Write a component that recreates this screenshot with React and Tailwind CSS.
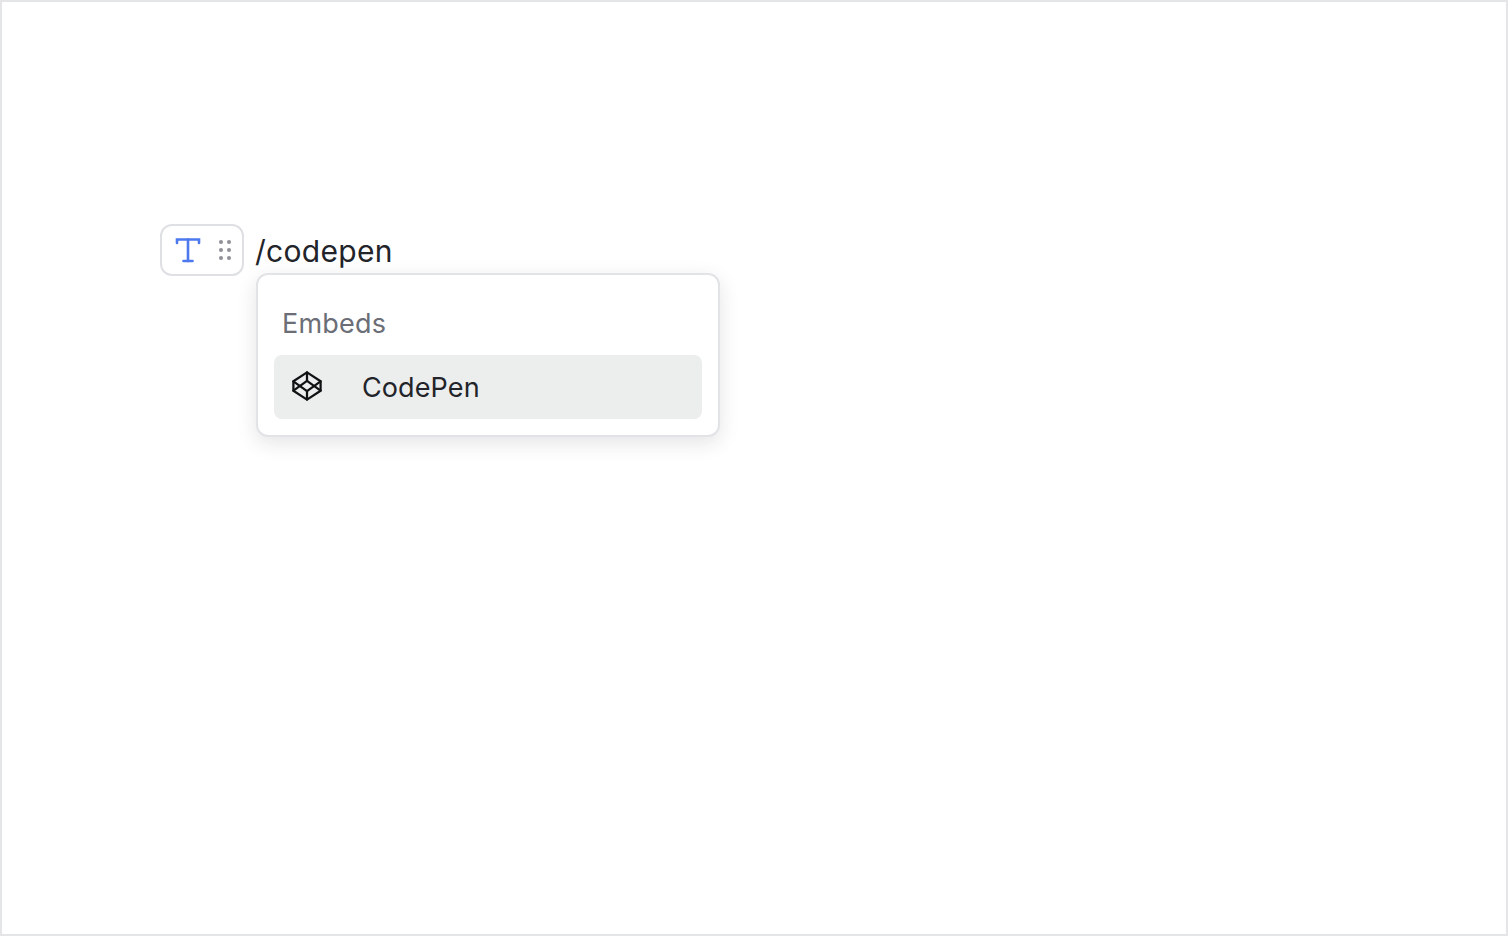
import React from 'react'

function CodePenIcon() {
  return (
    <svg width="30" height="30" viewBox="0 0 32 32" fill="none" stroke="#111214" strokeWidth="2.4" strokeLinejoin="round" strokeLinecap="round" className="-mt-0.5">
      <path d="M16 1.5 L30.5 11 V21 L16 30.5 L1.5 21 V11 Z" />
      <path d="M16 1.5 V10.5 M16 21.5 V30.5" />
      <path d="M1.5 11 L16 21.5 L30.5 11" />
      <path d="M1.5 21 L16 10.5 L30.5 21" />
    </svg>
  )
}

function DragDots() {
  return (
    <div className="grid grid-cols-2 gap-x-[4px] gap-y-[4px]">
      {[0, 1, 2, 3, 4, 5].map((i) => (
        <span key={i} className="w-1 h-1 rounded-full bg-[#8e9096]" />
      ))}
    </div>
  )
}

function App() {
  return (
    <div className="w-[1508px] h-[936px] bg-white border-2 border-[#e4e5e7] pt-[222px] pl-[158px] font-['Inter',sans-serif] overflow-hidden">
      <div className="flex items-start gap-3">
        {/* block handle */}
        <div className="w-[84px] h-[52px] flex items-center pl-[13px] border-2 border-[#dfe0e4] rounded-[12px]">
          <svg width="26" height="26" viewBox="0 0 26 26" fill="none" stroke="#4d78ee" strokeWidth="2.6" strokeLinecap="round">
            <path d="M2 6 V2.5 H24 V6" />
            <path d="M13 2.5 V24" />
            <path d="M8.5 24 H17.5" />
          </svg>
          <div className="ml-[18px]">
            <DragDots />
          </div>
        </div>

        <div className="relative">
          <div className="text-[30px] leading-[52px] pt-px -ml-px text-[#22242a] tracking-[0.3px]">/codepen</div>

          {/* slash menu */}
          <div className="absolute left-0 top-[49px] w-[464px] h-[164px] bg-white border-2 border-[#e2e3e6] rounded-[12px] shadow-[0_6px_20px_rgba(30,35,50,0.12)] px-4 pt-[29px]">
            <div className="pl-2 text-[27px] leading-[40px] text-[#6b6e76] tracking-[0.2px]">Embeds</div>
            <div className="mt-[11px] h-16 w-[428px] rounded-lg bg-[#eceeee] flex items-center pl-[18px]">
              <CodePenIcon />
              <span className="ml-[40px] pt-[2px] text-[27px] text-[#22242a] tracking-[0.1px]">CodePen</span>
            </div>
          </div>
        </div>
      </div>
    </div>
  )
}

export default App
